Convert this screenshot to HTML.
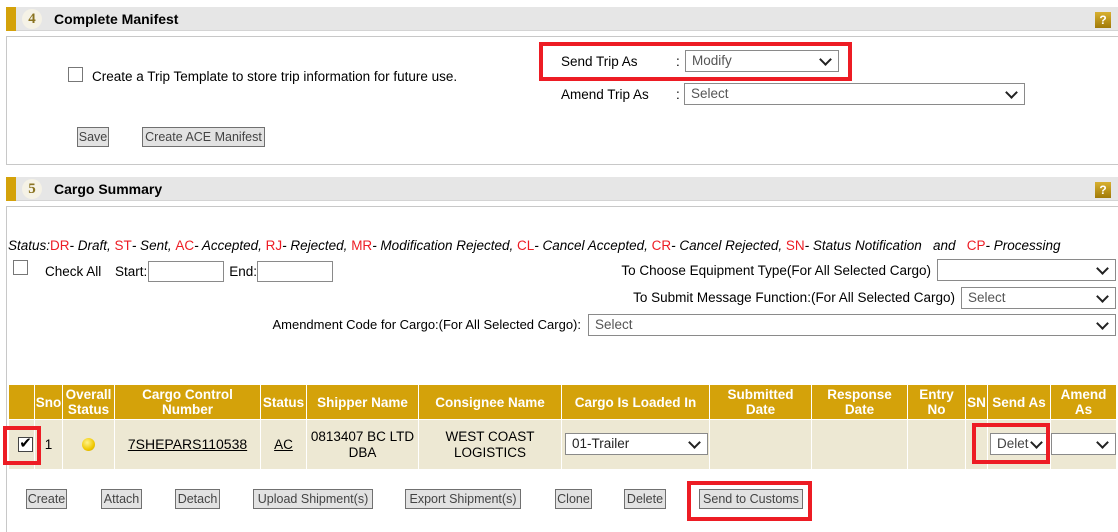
<!DOCTYPE html>
<html><head><meta charset="utf-8"><style>
*{margin:0;padding:0;box-sizing:border-box}
html{width:1118px;height:532px;overflow:hidden}
body{width:1118px;height:532px;background:#fff;position:relative;overflow:hidden;font-family:"Liberation Sans",sans-serif;font-size:13.5px;color:#000}
.a{position:absolute;white-space:nowrap}
.hdr{position:absolute;left:6px;width:1112px;height:24px;background:#e6e6e6;border-bottom:1px solid #d4d4d4}
.hdr .strip{position:absolute;left:0;top:0;width:10px;height:24px;background:#d4a20a}
.hdr .num{position:absolute;left:16px;top:2px;width:20px;height:20px;border-radius:50%;background:#f5f2e6;color:#8a7320;font:bold 15px "Liberation Serif",serif;text-align:center;line-height:20px}
.hdr .t{position:absolute;left:48px;top:4px;font-weight:bold;font-size:14px}
.hdr .q{position:absolute;left:1089px;top:5px;width:16px;height:16px;background:linear-gradient(#d8b030,#a07a08);color:#fff;font:bold 12px "Liberation Sans";text-align:center;line-height:16px}
.box{position:absolute;left:6px;width:1112px;border:1px solid #c8c8c8;border-right:none}
.cb{position:absolute;width:15px;height:15px;border:1px solid #777;background:#fff}
.sel{position:absolute;height:22px;border:1px solid #8a8a8a;background:#fff;color:#555;padding-left:6px;line-height:20px;overflow:hidden}
.sel:after{content:"";position:absolute;right:8px;top:4px;width:7px;height:7px;border-right:2px solid #222;border-bottom:2px solid #222;transform:rotate(45deg)}
.inp{position:absolute;height:21px;border:1px solid #8a8a8a;background:#fff}
.btn{position:absolute;height:20px;border:1px solid #707070;background:#e2e2e2;color:#444;text-align:center;line-height:18px;font-size:12.5px;overflow:hidden;white-space:nowrap}
.red{position:absolute;border:4px solid #ed1c24}
.r{color:#ed1c24;font-style:normal}
table{position:absolute;left:8px;top:384px;border-collapse:collapse;table-layout:fixed;width:1108px}
th{background:#d4a20a;color:#fff;font-weight:bold;font-size:13.5px;height:35px;border:1px solid #fff;line-height:15px;text-align:center;overflow:hidden;white-space:nowrap}
td{background:#ede8d3;height:50px;border:1px solid #fff;text-align:center;font-size:13.5px;line-height:16px;position:relative}
</style></head><body>
<div class="hdr" style="top:7px"><div class="strip"></div><div class="num">4</div><div class="t">Complete Manifest</div><div class="q">?</div></div>
<div class="box" style="top:36px;height:129px"></div>
<div class="cb" style="left:68px;top:67px"></div>
<div class="a" style="left:92px;top:69px">Create a Trip Template to store trip information for future use.</div>
<div class="btn" style="left:77px;top:127px;width:32px">Save</div>
<div class="btn" style="left:142px;top:127px;width:123px">Create ACE Manifest</div>
<div class="red" style="left:539px;top:42px;width:313px;height:39px"></div>
<div class="a" style="left:561px;top:54px">Send Trip As</div><div class="a" style="left:676px;top:54px">:</div>
<div class="sel" style="left:685px;top:50px;width:154px">Modify</div>
<div class="a" style="left:561px;top:87px">Amend Trip As</div><div class="a" style="left:676px;top:87px">:</div>
<div class="sel" style="left:684px;top:83px;width:341px">Select</div>

<div class="hdr" style="top:177px"><div class="strip"></div><div class="num">5</div><div class="t">Cargo Summary</div><div class="q">?</div></div>
<div class="box" style="top:206px;height:340px"></div>
<div class="a" style="left:8px;top:238px;font-style:italic">Status:<span class="r">DR</span>- Draft, <span class="r">ST</span>- Sent, <span class="r">AC</span>- Accepted, <span class="r">RJ</span>- Rejected, <span class="r">MR</span>- Modification Rejected, <span class="r">CL</span>- Cancel Accepted, <span class="r">CR</span>- Cancel Rejected, <span class="r">SN</span>- Status Notification &nbsp;&nbsp;and &nbsp;&nbsp;<span class="r">CP</span>- Processing</div>
<div class="cb" style="left:13px;top:260px"></div>
<div class="a" style="left:45px;top:264px">Check All</div>
<div class="a" style="left:115px;top:264px">Start:</div><div class="inp" style="left:148px;top:261px;width:76px"></div>
<div class="a" style="left:257px;top:264px;transform:translateX(-100%)">End:</div><div class="inp" style="left:257px;top:261px;width:76px"></div>
<div class="a" style="right:187px;top:263px">To Choose Equipment Type(For All Selected Cargo)</div>
<div class="sel" style="left:937px;top:259px;width:179px"></div>
<div class="a" style="right:163px;top:290px">To Submit Message Function:(For All Selected Cargo)</div>
<div class="sel" style="left:961px;top:287px;width:155px">Select</div>
<div class="a" style="right:537px;top:317px;font-size:13px">Amendment Code for Cargo:(For All Selected Cargo):</div>
<div class="sel" style="left:588px;top:314px;width:528px">Select</div>

<table>
<colgroup><col style="width:26px"><col style="width:28px"><col style="width:52px"><col style="width:146px"><col style="width:46px"><col style="width:112px"><col style="width:143px"><col style="width:148px"><col style="width:102px"><col style="width:96px"><col style="width:58px"><col style="width:22px"><col style="width:63px"><col style="width:66px"></colgroup>
<tr><th></th><th>Sno</th><th>Overall<br>Status</th><th>Cargo Control<br>Number</th><th>Status</th><th>Shipper Name</th><th>Consignee Name</th><th>Cargo Is Loaded In</th><th>Submitted<br>Date</th><th>Response<br>Date</th><th>Entry<br>No</th><th>SN</th><th>Send As</th><th>Amend<br>As</th></tr>
<tr><td><div class="cb" style="left:9px;top:17px;border-color:#444;font-size:15px;line-height:12px;text-align:center">✔</div></td><td>1</td><td><div style="width:13px;height:13px;border-radius:50%;background:radial-gradient(circle at 40% 35%,#fff38a,#f0c800 60%,#c9a000);margin:auto"></div></td><td><u style="font-size:14px">7SHEPARS110538</u></td><td><u>AC</u></td><td>0813407 BC LTD<br>DBA</td><td>WEST COAST<br>LOGISTICS</td><td><div class="sel" style="left:3px;top:13px;width:143px;color:#222;text-align:left">01-Trailer</div></td><td></td><td></td><td></td><td></td><td><div class="sel" style="left:2px;top:13px;width:60px;color:#444;text-align:left;padding-right:20px">Delet</div></td><td><div class="sel" style="left:0;top:13px;width:65px"></div></td></tr>
</table>
<div class="red" style="left:3px;top:426px;width:38px;height:39px"></div>
<div class="red" style="left:972px;top:423px;width:78px;height:41px"></div>

<div class="btn" style="left:26px;top:489px;width:41px">Create</div>
<div class="btn" style="left:101px;top:489px;width:41px">Attach</div>
<div class="btn" style="left:175px;top:489px;width:45px">Detach</div>
<div class="btn" style="left:253px;top:489px;width:120px">Upload Shipment(s)</div>
<div class="btn" style="left:405px;top:489px;width:116px">Export Shipment(s)</div>
<div class="btn" style="left:555px;top:489px;width:37px">Clone</div>
<div class="btn" style="left:624px;top:489px;width:42px">Delete</div>
<div class="btn" style="left:699px;top:489px;width:104px">Send to Customs</div>
<div class="red" style="left:687px;top:481px;width:125px;height:40px"></div>
</body></html>
